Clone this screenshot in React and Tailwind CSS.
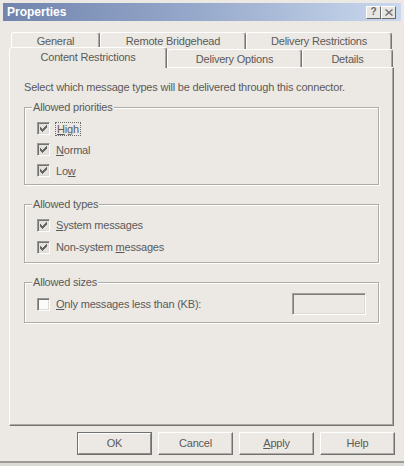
import React from "react";

const Check = () => (
  <svg width="7" height="7" viewBox="0 0 7 7" shapeRendering="crispEdges">
    <path
      fill="#666666"
      d="M6 0h1v1h-1z M5 1h2v1h-2z M0 2h1v1h-1z M4 2h3v1h-3z M0 3h2v1h-2z M3 3h3v1h-3z M0 4h5v1h-5z M1 5h3v1h-3z M2 6h1v1h-1z"
    />
  </svg>
);

function Checkbox({ checked }) {
  return (
    <div
      className={
        checked
          ? "w-[13px] h-[13px] shrink-0 border border-t-[#9a9894] border-l-[#9a9894] border-b-white border-r-white shadow-[inset_1px_1px_0_#727272,inset_-1px_-1px_0_#dedbd6] bg-[#e4e2dd] flex items-center justify-center"
          : "w-[13px] h-[13px] shrink-0 border border-t-[#9a9894] border-l-[#9a9894] border-b-white border-r-white shadow-[inset_1px_1px_0_#727272,inset_-1px_-1px_0_#dedbd6] bg-[#fbfbfa] flex items-center justify-center"
      }
    >
      {checked && <Check />}
    </div>
  );
}

function Row({ checked, children, focus, h = "h-[21px]" }) {
  return (
    <div className={`${h} flex items-center gap-[5px]`}>
      <Checkbox checked={checked} />
      {focus ? (
        <span className="border border-dotted border-[#6a6a6a] px-px leading-[12px]">{children}</span>
      ) : (
        <span className="leading-[12px] pl-px">{children}</span>
      )}
    </div>
  );
}

function Group({ title, mt, inner, children }) {
  return (
    <fieldset
      className={`${mt} mx-[14px] border border-[#aeaca7] shadow-[inset_1px_1px_0_#ffffff,1px_1px_0_#ffffff]`}
    >
      <legend className="ml-[7px] px-px leading-[14px] bg-[#ece9e4]">{title}</legend>
      <div className={inner}>{children}</div>
    </fieldset>
  );
}

function Tab({ w, children, selected, h }) {
  return (
    <div
      className={`${w} ${h} shrink-0 bg-[#ece9e4] border-t border-l border-t-white border-l-white border-r border-r-[#747474] shadow-[inset_-1px_0_0_#aba8a3] rounded-t-[3px] flex items-center justify-center ${
        selected ? "relative z-10 -mb-px pb-[2px]" : "pt-px"
      }`}
    >
      {children}
    </div>
  );
}

function Btn({ children, def }) {
  if (def) {
    return (
      <div className="w-[75px] h-[23px] border border-[#707070] flex">
        <div className="flex-1 border border-t-white border-l-white border-b-[#8e8c88] border-r-[#8e8c88] bg-[#ece9e4] flex items-center justify-center">
          {children}
        </div>
      </div>
    );
  }
  return (
    <div className="w-[75px] h-[23px] border border-t-white border-l-white border-b-[#707070] border-r-[#707070] shadow-[inset_-1px_-1px_0_#b0ada8] bg-[#ece9e4] flex items-center justify-center">
      {children}
    </div>
  );
}

export default function App() {
  return (
    <div className="relative w-[404px] h-[466px] overflow-hidden bg-[#ece9e4] font-['Liberation_Sans',Arial,sans-serif] text-[11px] tracking-[-0.2px] text-[#5a5a5a] flex flex-col">
      {/* title bar */}
      <div className="mx-[3px] mt-[3px] h-[18px] shrink-0 flex items-center justify-between pl-[4px] pr-[5px] bg-linear-to-r from-[#7184ad] via-[#98aacc] to-[#cad9ee]">
        <span className="text-white font-bold text-[12px] tracking-normal leading-none">Properties</span>
        <div className="flex">
          <div className="w-[15px] h-[13px] bg-[#e8e6e2] border border-t-white border-l-white border-b-[#6a6a6a] border-r-[#6a6a6a] flex items-center justify-center text-[10px] font-bold leading-none text-[#6a6a6a] tracking-normal">
            ?
          </div>
          <div className="w-[15px] h-[13px] bg-[#e8e6e2] border border-t-white border-l-white border-b-[#6a6a6a] border-r-[#6a6a6a] flex items-center justify-center">
            <svg width="8" height="7" viewBox="0 0 8 7">
              <path d="M0.5 0.5L7.5 6.5M7.5 0.5L0.5 6.5" stroke="#707070" strokeWidth="1.4" />
            </svg>
          </div>
        </div>
      </div>

      {/* tabs + panel */}
      <div className="ml-[9px] w-[385px] mt-[11px] flex flex-col">
        <div className="flex h-[17px] pl-[2px]">
          <Tab w="w-[89px]" h="h-[17px]">General</Tab>
          <Tab w="w-[146px]" h="h-[17px]">Remote Bridgehead</Tab>
          <Tab w="w-[146px]" h="h-[17px]">Delivery Restrictions</Tab>
        </div>
        <div className="flex h-[18px] items-end">
          <Tab w="w-[158px]" h="h-[21px]" selected>
            Content Restrictions
          </Tab>
          <Tab w="w-[135px]" h="h-[18px]">Delivery Options</Tab>
          <Tab w="w-[91px]" h="h-[18px]">Details</Tab>
        </div>

        <div className="h-[359px] border-t border-l border-t-white border-l-white border-r border-b border-r-[#747474] border-b-[#747474] shadow-[inset_-1px_-1px_0_#aba8a3] pt-[12px]">
          <p className="pl-[14px] leading-[14px]">
            Select which message types will be delivered through this connector.
          </p>

          <Group title="Allowed priorities" mt="mt-[6px]" inner="pt-[4px] pb-[3px] pl-[12px]">
            <Row checked focus>
              <span className="underline">H</span>igh
            </Row>
            <Row checked>
              <span className="underline">N</span>ormal
            </Row>
            <Row checked>
              Lo<span className="underline">w</span>
            </Row>
          </Group>

          <Group title="Allowed types" mt="mt-[12px]" inner="pt-[3px] pb-[4px] pl-[12px]">
            <Row checked h="h-[22px]">
              <span className="underline">S</span>ystem messages
            </Row>
            <Row checked h="h-[22px]">
              Non-system <span className="underline">m</span>essages
            </Row>
          </Group>

          <Group title="Allowed sizes" mt="mt-[12px]" inner="pt-[4px] pb-[7px] pl-[12px] pr-[12px]">
            <div className="flex items-center justify-between">
              <Row checked={false} h="h-[22px]">
                <span className="underline">O</span>nly messages less than (KB):
              </Row>
              <div className="w-[74px] h-[22px] border border-t-[#a3a09b] border-l-[#a3a09b] border-b-white border-r-white shadow-[inset_1px_1px_0_#7e7e7e,inset_-1px_-1px_0_#dedbd6] bg-[#ece9e4]" />
            </div>
          </Group>
        </div>
      </div>

      {/* buttons */}
      <div className="mt-[6px] flex justify-end gap-[6px] pr-[9px]">
        <Btn def>OK</Btn>
        <Btn>Cancel</Btn>
        <Btn>
          <span>
            <span className="underline">A</span>pply
          </span>
        </Btn>
        <Btn>Help</Btn>
      </div>

      <div className="mt-[6px] h-[2px] bg-[#9d9b97] shrink-0" />
      <div className="flex-1 bg-[#dcdad5]" />
    </div>
  );
}
